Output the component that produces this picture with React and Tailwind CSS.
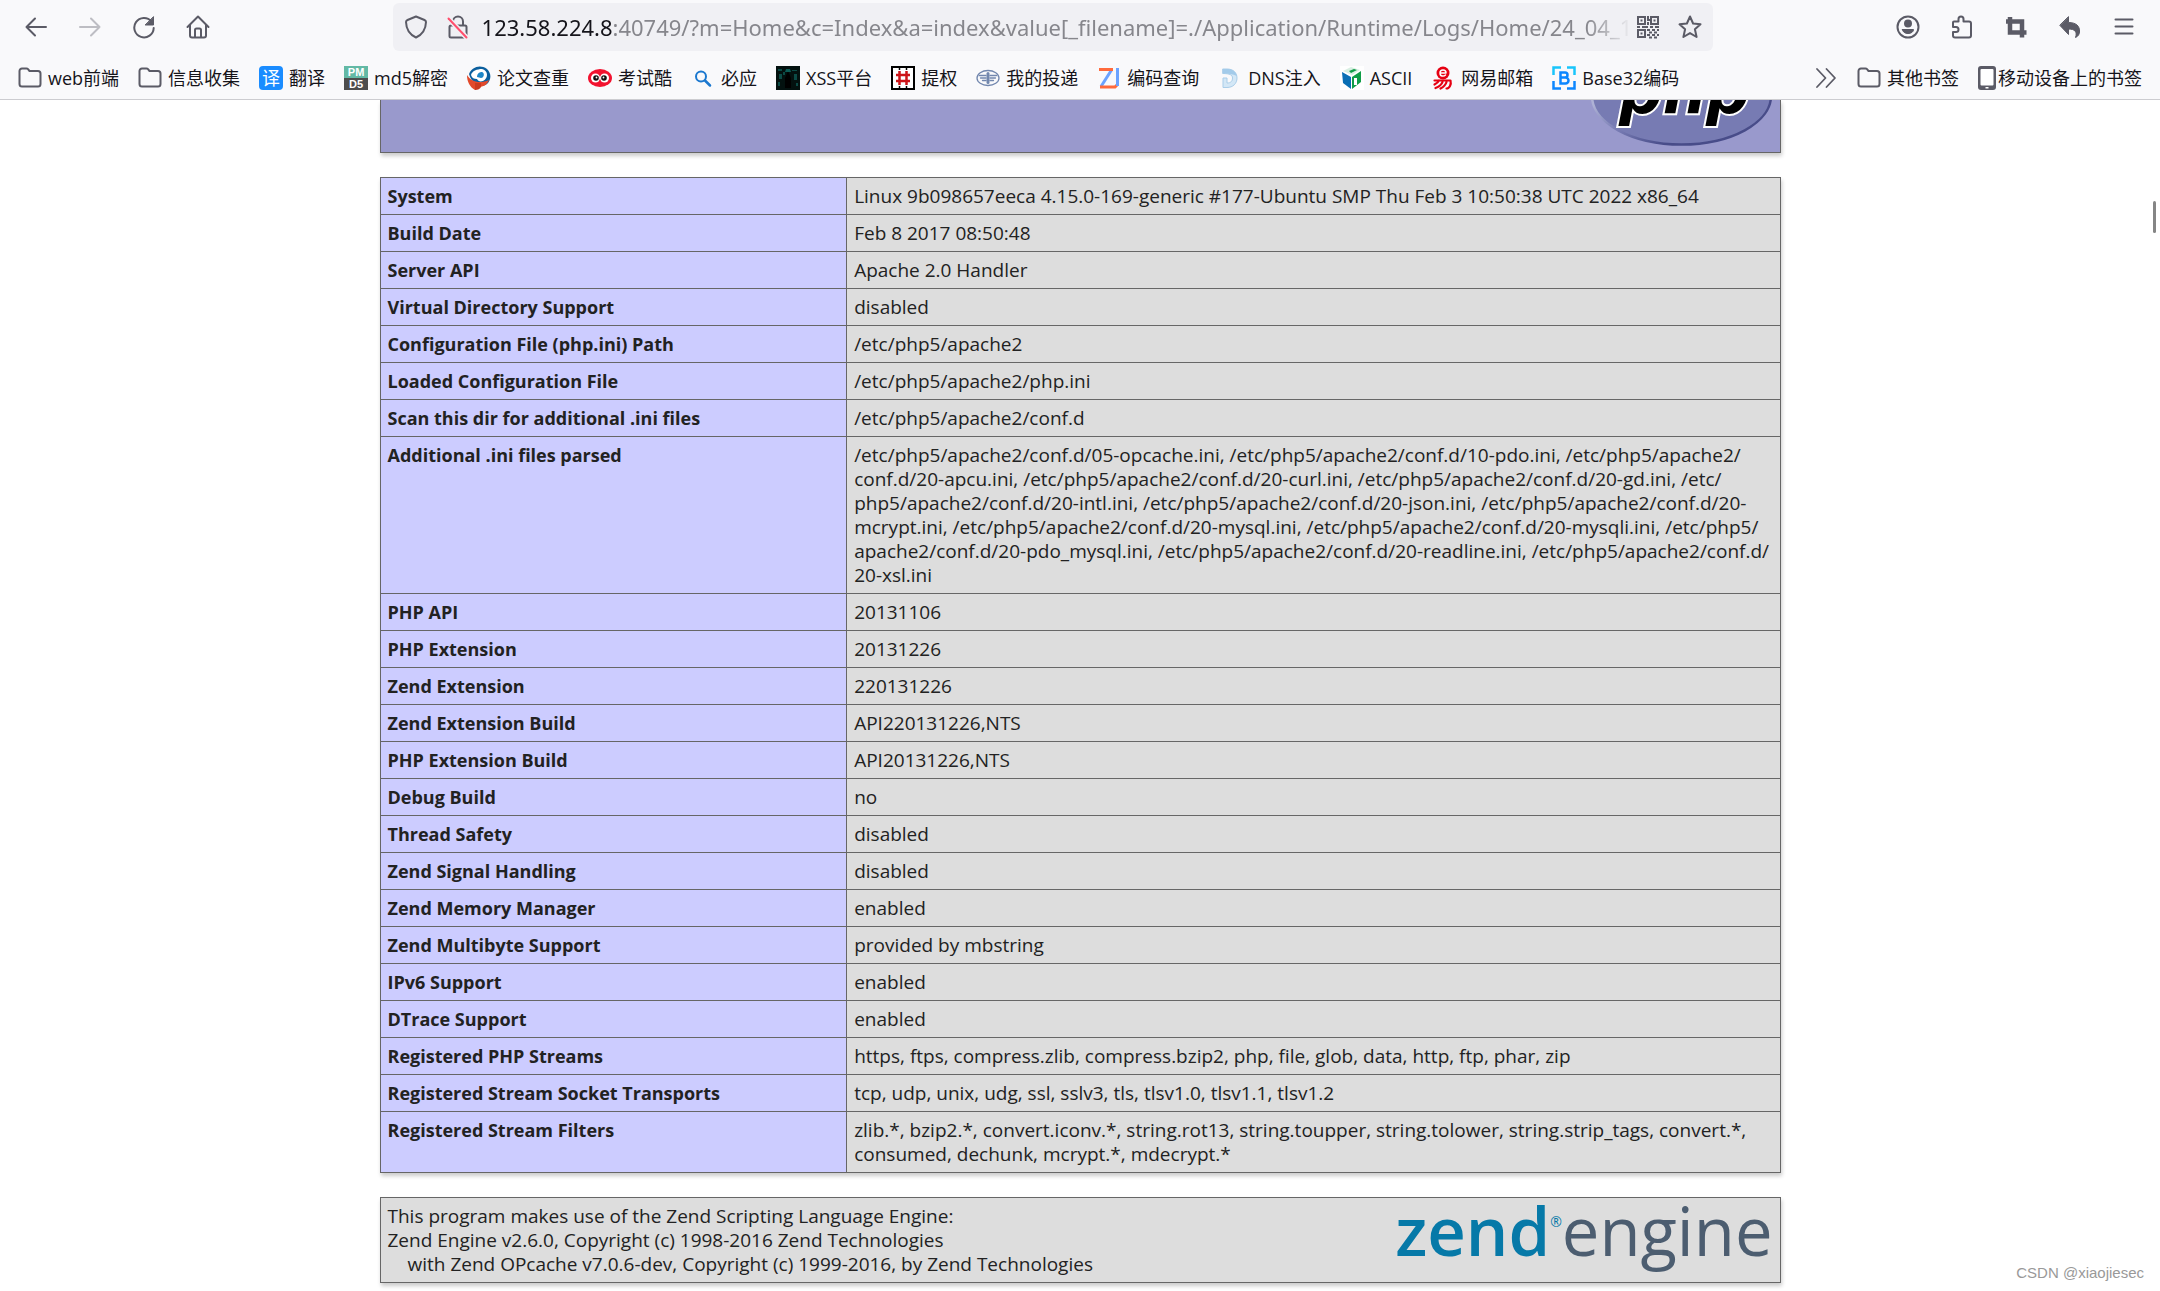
/**
 * App.jsx: browser window showing the general section of a phpinfo() page
 */

const INFO_ROWS = [
  ['System', ['Linux 9b098657eeca 4.15.0-169-generic #177-Ubuntu SMP Thu Feb 3 10:50:38 UTC 2022 x86_64']],
  ['Build Date', ['Feb 8 2017 08:50:48']],
  ['Server API', ['Apache 2.0 Handler']],
  ['Virtual Directory Support', ['disabled']],
  ['Configuration File (php.ini) Path', ['/etc/php5/apache2']],
  ['Loaded Configuration File', ['/etc/php5/apache2/php.ini']],
  ['Scan this dir for additional .ini files', ['/etc/php5/apache2/conf.d']],
  ['Additional .ini files parsed', [
    '/etc/php5/apache2/conf.d/05-opcache.ini, /etc/php5/apache2/conf.d/10-pdo.ini, /etc/php5/apache2/',
    'conf.d/20-apcu.ini, /etc/php5/apache2/conf.d/20-curl.ini, /etc/php5/apache2/conf.d/20-gd.ini, /etc/',
    'php5/apache2/conf.d/20-intl.ini, /etc/php5/apache2/conf.d/20-json.ini, /etc/php5/apache2/conf.d/20-',
    'mcrypt.ini, /etc/php5/apache2/conf.d/20-mysql.ini, /etc/php5/apache2/conf.d/20-mysqli.ini, /etc/php5/',
    'apache2/conf.d/20-pdo_mysql.ini, /etc/php5/apache2/conf.d/20-readline.ini, /etc/php5/apache2/conf.d/',
    '20-xsl.ini',
  ]],
  ['PHP API', ['20131106']],
  ['PHP Extension', ['20131226']],
  ['Zend Extension', ['220131226']],
  ['Zend Extension Build', ['API220131226,NTS']],
  ['PHP Extension Build', ['API20131226,NTS']],
  ['Debug Build', ['no']],
  ['Thread Safety', ['disabled']],
  ['Zend Signal Handling', ['disabled']],
  ['Zend Memory Manager', ['enabled']],
  ['Zend Multibyte Support', ['provided by mbstring']],
  ['IPv6 Support', ['enabled']],
  ['DTrace Support', ['enabled']],
  ['Registered PHP Streams', ['https, ftps, compress.zlib, compress.bzip2, php, file, glob, data, http, ftp, phar, zip']],
  ['Registered Stream Socket Transports', ['tcp, udp, unix, udg, ssl, sslv3, tls, tlsv1.0, tlsv1.1, tlsv1.2']],
  ['Registered Stream Filters', [
    'zlib.*, bzip2.*, convert.iconv.*, string.rot13, string.toupper, string.tolower, string.strip_tags, convert.*,',
    'consumed, dechunk, mcrypt.*, mdecrypt.*',
  ]],
]

// ── Toolbar icons ───────────────────────────────────────────────────────────

function Icon({ children, className = 'text-[#5b5b66]' }) {
  return (
    <svg
      viewBox="0 0 24 24"
      className={`size-6 shrink-0 ${className}`}
      fill="none"
      stroke="currentColor"
      strokeWidth="2"
      strokeLinecap="round"
      strokeLinejoin="round"
      aria-hidden="true"
    >
      {children}
    </svg>
  )
}

const BackIcon = () => <Icon><path d="M22 12H2.5M11 3.5 2.5 12l8.500 8.500" /></Icon>
const ForwardIcon = () => <Icon className="text-[#bdbdc3]"><path d="M2 12h19.500M13 3.500 21.500 12 13 20.500" /></Icon>
const ReloadIcon = () => (
  <Icon>
    <path d="M19.500 6.500A9.700 9.700 0 1 0 21.700 13" />
    <path d="M21.500 2v8h-8z" fill="currentColor" strokeWidth="1" />
  </Icon>
)
const HomeIcon = () => (
  <Icon>
    <path d="M1.500 12 12 1.500 22.500 12M4 10v10.500a2 2 0 0 0 2 2h12a2 2 0 0 0 2-2V10" />
    <path d="M9 22v-7a1.500 1.500 0 0 1 1.500-1.500h3A1.500 1.500 0 0 1 15 15v7" />
  </Icon>
)
const ShieldIcon = () => (
  <Icon><path d="M12 1.500 20.500 5c1 .4 1.500 1 1.500 2-.2 6.500-3.500 12.500-10 15.500C5.500 19.500 2.200 13.500 2 7c0-1 .5-1.600 1.500-2z" /></Icon>
)
const LockIcon = () => (
  <Icon>
    <path d="M7 10V6.500a5 5 0 0 1 10 0V10M5 10.500h14a1.500 1.500 0 0 1 1.500 1.500v9a1.500 1.500 0 0 1-1.500 1.500H5A1.500 1.500 0 0 1 3.500 21v-9A1.500 1.500 0 0 1 5 10.500z" />
    <path d="M2.500 3.500 20.500 22.500" stroke="#f0f0f4" strokeWidth="5" />
    <path d="M2.500 3.500 20.500 22.500" stroke="#ff4f6d" />
  </Icon>
)
const StarIcon = () => (
  <Icon><path d="m12 1.500 3.100 7 7.400.8-5.600 5 1.700 7.700-6.600-3.900L5.400 22l1.700-7.700-5.600-5 7.400-.8z" /></Icon>
)
const QrIcon = () => (
  <Icon>
    <g strokeLinejoin="miter" strokeLinecap="butt">
      <path d="M2 2h7v7H2zM15 2h7v7h-7zM2 15h7v7H2z" />
      <path d="M4.500 5.500h2M17.500 5.500h2M4.500 18.500h2M12 1v3M11 5h3M12 7v3M1 12h3M6 12h6M14 12h3M19 12h4M11 15h3M16 15h3M21 15h2M13 17.500h3M18 17.500h3M11 20h3M16 20h3M21 20h2M13 22.500h3M18 22.500h3" />
    </g>
  </Icon>
)
const AccountIcon = () => (
  <Icon>
    <circle cx="12" cy="12" r="10.500" />
    <circle cx="12" cy="8.500" r="3" fill="currentColor" />
    <path d="M6.500 14.500h11c0 2.500-2.500 4-5.500 4s-5.500-1.500-5.500-4z" fill="currentColor" strokeWidth="1" />
  </Icon>
)
const PuzzleIcon = () => (
  <Icon>
    <path d="M4 6.500h4.500V4a2.500 2.500 0 0 1 5 0v2.500H19a2 2 0 0 1 2 2v12a2 2 0 0 1-2 2H5a2 2 0 0 1-2-2V17h3a2.500 2.500 0 0 0 0-5H3V7.500a1 1 0 0 1 1-1z" />
  </Icon>
)
const CropIcon = () => (
  <Icon><path d="M2 6.500h16v16M6 2v15.500h16.500" strokeWidth="4.500" strokeLinecap="butt" strokeLinejoin="miter" /></Icon>
)
const UndoIcon = () => (
  <Icon><path d="M10.500 2v5.500C18 7.500 22 11 21.500 17c-.2 2.500-1.500 4.500-4 5.500 2-5.500-.5-8.500-7-8.500v5.500L2 10.500z" fill="currentColor" strokeWidth="1" /></Icon>
)
const MenuIcon = () => <Icon><path d="M3.500 4.500h17M3.500 11.500h17M3.500 18.500h17" /></Icon>
const MoreIcon = () => <Icon><path d="m3 3 8.500 9L3 21M12.500 3l8.500 9-8.500 9" strokeWidth="1.800" /></Icon>
const FolderIcon = () => (
  <Icon><path d="M4 2.500h4.500a2 2 0 0 1 1.500.7L11.500 5H20a2.500 2.500 0 0 1 2.500 2.500V18a2.500 2.500 0 0 1-2.500 2.500H4A2.500 2.500 0 0 1 1.500 18V5A2.500 2.500 0 0 1 4 2.500z" /></Icon>
)

// ── Bookmark favicons ───────────────────────────────────────────────────────

const TranslateFav = () => (
  <span className="flex size-6 shrink-0 items-center justify-center rounded-sm bg-[#1a8cff] text-[18px] leading-6 text-white">译</span>
)
const PmdFav = () => (
  <span className="flex size-6 shrink-0 flex-col text-center font-['Liberation_Sans',sans-serif] text-[11px] leading-3 font-bold text-white">
    <span className="bg-[#63b9a5]">PM</span>
    <span className="bg-[#4d4d4d]">D5</span>
  </span>
)
const PaperFav = () => (
  <Icon>
    <g stroke="none">
      <path d="M2 8C5 1 13-2 20 3c5 5 4 11 0 15-4 3-9 2-12-1-3-2-5-5-6-9z" fill="#0b5f9e" />
      <path d="M0 9c4 7 13 9 22 5-2 5-6 7-10 7l-4 3c-5-3-8-8-8-15z" fill="#e2492b" />
      <path d="M8 17v7c3 0 5-1 6-3v-4z" fill="#c93a20" />
      <path d="M4 9c1-4 6-6 11-6 6 1 7 9 1 12-3 1-5 0-6-2-3 0-5-1-6-4z" fill="#fff" />
      <path d="M10 11c0-4 3-5 5-5 3 1 2 6-1 6z" fill="#1d86c8" />
    </g>
  </Icon>
)
const KuFav = () => (
  <Icon>
    <g stroke="none">
      <ellipse cx="12" cy="12" rx="12" ry="9" fill="#f2122f" />
      <circle cx="7.500" cy="12" r="4.500" fill="#fff" />
      <circle cx="16.500" cy="12" r="4.500" fill="#fff" />
      <circle cx="8" cy="12" r="2.800" fill="#111" />
      <circle cx="16" cy="12" r="2.800" fill="#111" />
      <circle cx="8.500" cy="11.500" r=".9" fill="#fff" />
      <circle cx="15.500" cy="11.500" r=".9" fill="#fff" />
    </g>
  </Icon>
)
const SearchFav = () => (
  <Icon className="text-[#1b78cf]"><circle cx="10" cy="10.500" r="5" /><path d="m14 14.500 5 5" strokeWidth="2.500" /></Icon>
)
const XssFav = () => (
  <Icon>
    <g stroke="none">
      <path d="M0 0h24v24H0z" fill="#03110f" />
      <path d="M2 3h4v2H2zM16 4h5v1h-5zM3 8h3v5H3zM18 8h3v6h-3zM7 6h2v3H7zM2 16h2v4H2zM20 17h2v3h-2z" fill="#0b4a45" />
      <path d="m12 5 3 7v10H9V12z" fill="#000" />
      <path d="M10 3h4l1 3H9z" fill="#0c5b54" />
    </g>
  </Icon>
)
const HashFav = () => (
  <Icon>
    <g strokeLinecap="butt" strokeLinejoin="miter">
      <path d="M1 1h22v22H1z" fill="#fff" stroke="#000" />
      <path d="M8.500 1v3M15.500 1v3M8.500 20v3M15.500 20v3" stroke="#000" strokeWidth="1.500" />
      <path d="M8.500 5v14M15.500 5v14M5 9h14M5 15h14" stroke="#cc1418" strokeWidth="2.500" />
    </g>
  </Icon>
)
const WingFav = () => (
  <Icon className="text-[#7287ae]">
    <g strokeWidth="1.300">
      <ellipse cx="12" cy="12" rx="11" ry="7.500" />
      <path d="M3.500 9.500H10M4.500 12H10M6.500 14.500H10M14 9.500h6.500M14 12h5.500M14 14.500h3.500" />
      <path d="M12 7.500v9" strokeWidth="3" />
    </g>
  </Icon>
)
const ZiFav = () => (
  <Icon>
    <g strokeWidth="3" strokeLinecap="butt" strokeLinejoin="miter">
      <path d="M14.500 4 4 20.500" stroke="#6ba2ff" />
      <path d="M2 3.500h14M3 21h15l2-2" stroke="#ff6a3c" />
      <path d="M20.500 2v18" stroke="#6ba2ff" />
    </g>
  </Icon>
)
const DnsFav = () => (
  <Icon>
    <path d="M5 3h4c6 0 10 3.500 10 9s-4 9.500-10 9.500H5V12h4v5c4 0 5.500-2 5.500-5S12 7.500 5 7.500z" fill="#d3e7f6" stroke="#a9cde9" strokeWidth="1" />
    <path d="M5 3h4c5 0 9 2.500 9.800 7C15 8 10 7.500 5 7.500z" fill="#a3cbea" stroke="none" />
  </Icon>
)
const AsciiFav = () => (
  <Icon>
    <g stroke="none">
      <path d="M0 0h24v24H0z" fill="#fff" />
      <path d="m2 6 9 5v12l-8-6z" fill="#0a6fb5" />
      <path d="m12 11 9-6v11l-9 7z" fill="#0f9d48" />
      <path d="m3 5 8-4 9 3-8 5z" fill="#d8efe2" />
      <path d="m9 5 5-2 3 1-6 3z" fill="#0f9d48" />
      <path d="M14 12h3v7h-3z" fill="#fff" />
    </g>
  </Icon>
)
const NeteaseFav = () => (
  <Icon className="text-[#e60012]">
    <circle cx="12" cy="7" r="6.500" fill="currentColor" stroke="none" />
    <path d="M9 7h6c0-4-6-4-6 0s4 3.500 5.500 2" stroke="#fff" strokeWidth="1.500" />
    <path d="M3.500 14.500h16c1 4-1 8-4 8M8 14.500c-1 2-2.500 3-4.500 4M11.500 16c-1 3-3 4.500-7 6M15.500 16c-1 3.500-3 5-6 6.500" strokeWidth="2.200" />
  </Icon>
)
const BaseFav = () => (
  <Icon className="text-[#0c86ff]">
    <g strokeLinecap="butt" strokeLinejoin="miter" strokeWidth="2.500">
      <path d="M1.500 9V1.500H9M15 1.500h7.500V9" stroke="#19c5fb" />
      <path d="M22.500 15v7.500H15M9 22.500H1.500V15" />
      <path d="M8.500 6.500h4.500a2.500 2.500 0 0 1 0 5H8.500zM8.500 11.500h5a3 3 0 0 1 0 6h-5z" />
    </g>
  </Icon>
)
const PhoneFav = () => (
  <svg viewBox="0 0 18 24" className="h-6 w-[18px] shrink-0 text-[#5b5b66]" aria-hidden="true">
    <rect width="18" height="24" rx="3" fill="currentColor" />
    <rect x="2.500" y="3" width="13" height="16.500" rx="1" fill="#fff" />
    <rect x="7.500" y="21" width="3" height="1.500" fill="#fff" />
  </svg>
)

const BOOKMARKS = [
  ['web前端', FolderIcon],
  ['信息收集', FolderIcon],
  ['翻译', TranslateFav],
  ['md5解密', PmdFav],
  ['论文查重', PaperFav],
  ['考试酷', KuFav],
  ['必应', SearchFav],
  ['XSS平台', XssFav],
  ['提权', HashFav],
  ['我的投递', WingFav],
  ['编码查询', ZiFav],
  ['DNS注入', DnsFav],
  ['ASCII', AsciiFav],
  ['网易邮箱', NeteaseFav],
  ['Base32编码', BaseFav],
]

// ── Browser chrome ──────────────────────────────────────────────────────────

function ToolButton({ label, icon: Glyph, disabled }) {
  return (
    <button type="button" aria-label={label} disabled={disabled} className="flex h-12 w-[54px] items-center justify-center">
      <Glyph />
    </button>
  )
}

function NavBar() {
  return (
    <div className="flex items-center px-[9px] pt-[3px]">
      <div className="flex">
        <ToolButton label="后退" icon={BackIcon} />
        <ToolButton label="前进" icon={ForwardIcon} disabled />
        <ToolButton label="重新载入" icon={ReloadIcon} />
        <ToolButton label="主页" icon={HomeIcon} />
      </div>
      <div className="flex-[4]" />
      <div className="flex h-12 min-w-0 flex-[31] items-center rounded-md bg-[#f0f0f4] px-[11px]">
        <button type="button" aria-label="跟踪保护"><ShieldIcon /></button>
        <button type="button" aria-label="连接不安全" className="ml-[18px]"><LockIcon /></button>
        <div className="ml-3 min-w-0 flex-1 overflow-hidden whitespace-nowrap [mask-image:linear-gradient(to_right,black_96%,transparent)] font-['Noto_Sans',sans-serif] text-[22px] leading-8 text-[#86868c]">
          <span className="text-[#15141a]">123.58.224.8</span>
          :40749/?m=Home&amp;c=Index&amp;a=index&amp;value[_filename]=./Application/Runtime/Logs/Home/24_04_1
        </div>
        <button type="button" aria-label="二维码" className="ml-1"><QrIcon /></button>
        <button type="button" aria-label="添加书签" className="ml-[18px]"><StarIcon /></button>
      </div>
      <div className="flex-[4]" />
      <div className="flex">
        <ToolButton label="账户" icon={AccountIcon} />
        <ToolButton label="扩展" icon={PuzzleIcon} />
        <ToolButton label="截图" icon={CropIcon} />
        <ToolButton label="撤销" icon={UndoIcon} />
        <ToolButton label="菜单" icon={MenuIcon} />
      </div>
    </div>
  )
}

function BookmarkBar() {
  return (
    <nav className="flex h-12 items-center gap-[19px] px-[18px] pt-1.5 text-[18px] leading-6 whitespace-nowrap text-[#15141a]">
      {BOOKMARKS.map(([label, Fav]) => (
        <a key={label} href="#" className="flex items-center gap-1.5">
          <Fav />
          {label}
        </a>
      ))}
      <button type="button" aria-label="更多书签" className="ml-auto"><MoreIcon /></button>
      <a href="#" className="flex items-center gap-1.5"><FolderIcon />其他书签</a>
      <a href="#" className="flex items-center gap-0.5"><PhoneFav />移动设备上的书签</a>
    </nav>
  )
}

// ── Page ────────────────────────────────────────────────────────────────────

function PhpLogo() {
  return (
    <svg viewBox="0 0 181 100" className="h-[100px] w-[181px] shrink-0" role="img" aria-label="PHP logo">
      <defs>
        <linearGradient id="rim" x1="0" y1="0" x2="1" y2="1">
          <stop offset="0.3" stopColor="#aeb2d5" />
          <stop offset="0.5" stopColor="#777bb3" />
          <stop offset="0.7" stopColor="#484c89" />
        </linearGradient>
      </defs>
      <ellipse cx="90.500" cy="50" rx="89.500" ry="48.500" fill="#777bb3" stroke="url(#rim)" strokeWidth="2.500" />
      <text
        x="28"
        y="67"
        className="font-['DejaVu_Sans',sans-serif] text-[61px] font-bold italic [paint-order:stroke]"
        fill="#000"
        stroke="#fff"
        strokeWidth="4"
      >
        php
      </text>
    </svg>
  )
}

function ZendLogo() {
  return (
    <a href="#" aria-label="Zend logo" className="flex h-[72px] items-start text-[67px] leading-[52px] text-[#4c5d70]">
      <span className="font-semibold text-[#0679a8]">zend</span>
      <span className="pt-0.5 text-[14px] leading-8 text-[#0679a8]">®</span>
      <span>engine</span>
    </a>
  )
}

export default function App() {
  return (
    <div className="relative min-h-screen overflow-hidden bg-white font-['Open_Sans','Noto_Sans_CJK_SC',sans-serif]">
      <header className="border-b border-[#ccccd0] bg-[#f9f9fb]">
        <NavBar />
        <BookmarkBar />
      </header>

      <main className="mx-auto max-w-[1401px] text-[19px] leading-6 text-[#222]">
        {/* Title banner, scrolled up so only its lower part is in view */}
        <div className="flex h-[53px] items-end justify-end overflow-hidden border border-t-0 border-[#666] bg-[#99c] pr-2 pb-1.5 shadow-[1px_3px_4px_#ccc]">
          <PhpLogo />
        </div>

        <table className="mt-6 w-full table-fixed border-collapse shadow-[1px_3px_4px_#ccc]">
          <colgroup>
            <col className="w-1/3" />
            <col />
          </colgroup>
          <tbody>
            {INFO_ROWS.map(([name, lines]) => (
              <tr key={name}>
                <th scope="row" className="border border-[#666] bg-[#ccf] px-[7px] py-1.5 text-left align-top text-[18px] leading-6 font-bold">
                  {name}
                </th>
                <td className="border border-[#666] bg-[#ddd] px-[7px] py-1.5 align-top">
                  {lines.map(line => <div key={line}>{line}</div>)}
                </td>
              </tr>
            ))}
          </tbody>
        </table>

        <div className="mt-6 mb-2 flex justify-between border border-[#666] bg-[#ddd] px-[7px] py-1.5 shadow-[1px_3px_4px_#ccc]">
          <div>
            <p>This program makes use of the Zend Scripting Language Engine:</p>
            <p>Zend Engine v2.6.0, Copyright (c) 1998-2016 Zend Technologies</p>
            <p className="pl-5">with Zend OPcache v7.0.6-dev, Copyright (c) 1999-2016, by Zend Technologies</p>
          </div>
          <ZendLogo />
        </div>
      </main>

      {/* Overlay scrollbar thumb and watermark */}
      <div className="absolute top-[201px] right-1 h-8 w-[3px] rounded-full bg-[#858585]" />
      <div className="absolute right-4 bottom-1.5 font-['Liberation_Sans',sans-serif] text-[15px] leading-6 text-[#999]">
        CSDN @xiaojiesec
      </div>
    </div>
  )
}
